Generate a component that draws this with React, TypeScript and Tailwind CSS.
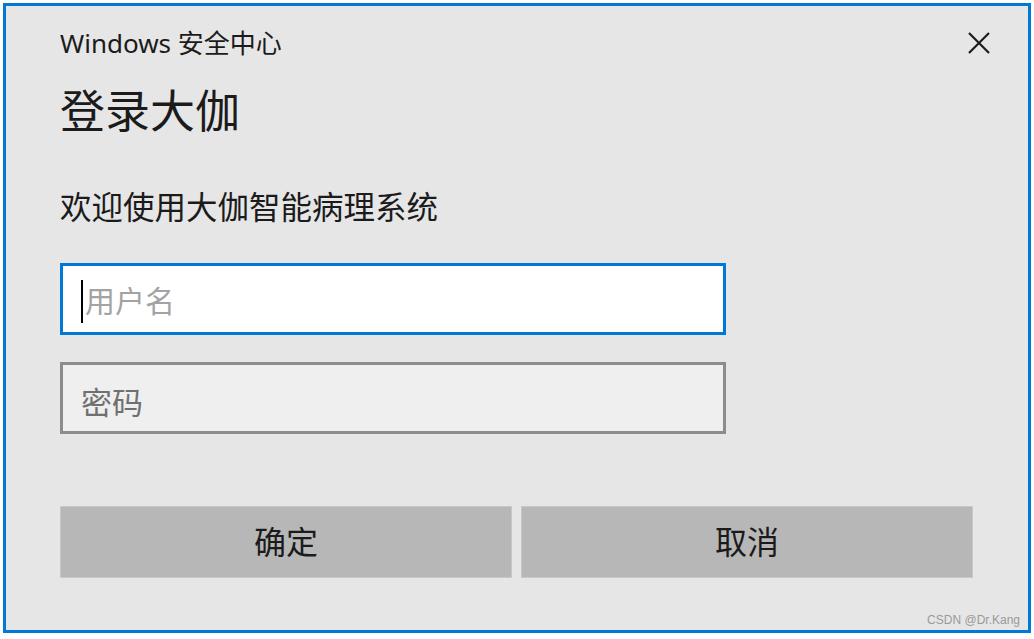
import React from "react";

const cjk = "font-['Noto_Sans','Noto_Sans_CJK_SC',sans-serif]";

const App = () => {
  return (
    <div className={`w-[1034px] h-[639px] bg-white p-[3px] ${cjk}`}>
      <div className="relative h-[630px] border-[3px] border-[#0078d7] bg-[#e6e6e6] text-[#1b1b1b]">
        {/* title bar */}
        <div className="flex items-center justify-between pl-[54px] pr-[34px] pt-[22px]">
          <span className="text-[26px] leading-[30px]">Windows 安全中心</span>
          <button className="flex h-[30px] w-[30px] items-center justify-center">
            <svg width="24" height="24" viewBox="0 0 24 24" fill="none" stroke="#1b1b1b" strokeWidth="2.2">
              <path d="M2 2 L22 22 M22 2 L2 22" />
            </svg>
          </button>
        </div>

        <div className="flex flex-col pl-[54px] pr-[55px]">
          <h1 className="mt-[25px] text-[45px] leading-[56px]">登录大伽</h1>
          <p className="mt-[48px] text-[31.5px] leading-[40px]">欢迎使用大伽智能病理系统</p>

          <div className="mt-[36px] flex h-[72px] w-[666px] items-center border-[3px] border-[#0078d7] bg-white pl-[18px] pt-[4px]">
            <span className="h-[43px] w-[2px] bg-black" />
            <span className="ml-[2px] text-[30px] leading-[40px] text-[#a3a3a3]">用户名</span>
          </div>

          <div className="mt-[27px] flex h-[72px] w-[666px] items-center border-[3px] border-[#8c8c8c] bg-[#efefef] pl-[18px] pt-[8px]">
            <span className="text-[31px] leading-[40px] text-[#707070]">密码</span>
          </div>

          <div className="mt-[72px] grid grid-cols-2 gap-[9px]">
            <button className="h-[72px] border border-[#c8c8c8] bg-[#b7b7b7] text-[32px] text-[#1b1b1b]">确定</button>
            <button className="h-[72px] border border-[#c8c8c8] bg-[#b7b7b7] text-[32px] text-[#1b1b1b]">取消</button>
          </div>
        </div>

        <span className="absolute bottom-[2px] right-[8px] text-[12px] leading-[16px] text-[#9a9a9a] font-['Liberation_Sans',sans-serif]">
          CSDN @Dr.Kang
        </span>
      </div>
    </div>
  );
};

export default App;
